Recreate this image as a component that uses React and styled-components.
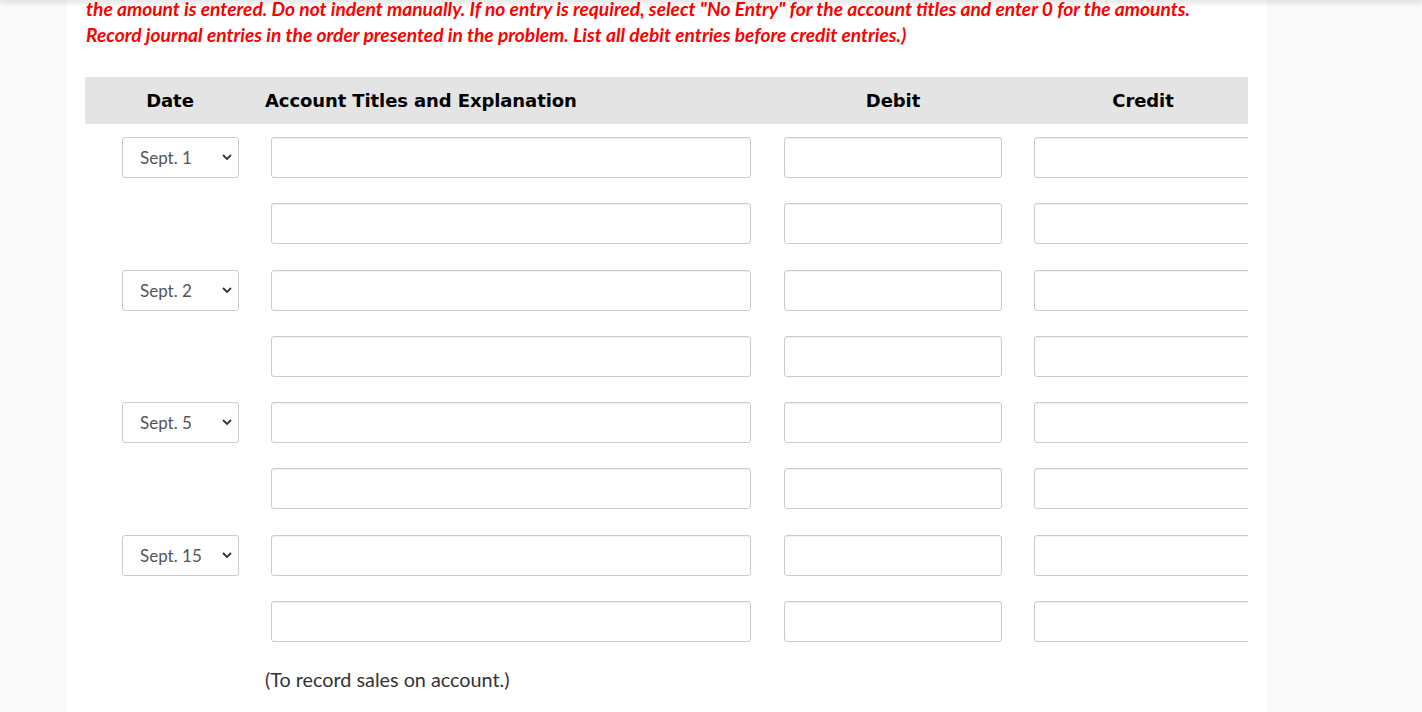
import React from "react";
import styled, { createGlobalStyle } from "styled-components";

const GlobalStyle = createGlobalStyle`
  html, body {
    margin: 0;
    padding: 0;
    background-color: #fafafa;
  }
  body {
    font-family: Lato, "Open Sans", sans-serif;
    overflow: hidden;
  }
`;

const TopShadow = styled.div`
  position: fixed;
  top: 0;
  left: 0;
  right: 0;
  height: 0;
  box-shadow: 0 0 6px 2px rgba(0, 0, 0, 0.18);
  z-index: 5;
`;

const Panel = styled.div`
  width: 1200px;
  min-height: 760px;
  margin-left: 67px;
  padding: 0 19px 0 18px;
  box-sizing: border-box;
  background-color: white;
`;

const Instructions = styled.p`
  margin: -4px 0 0 1px;
  color: #ff0000;
  font-family: Lato, sans-serif;
  font-style: italic;
  font-weight: 700;
  font-size: 19.2px;
  line-height: 26px;
  white-space: nowrap;
`;

const TableWrap = styled.div`
  margin-top: 29px;
  width: 1163px;
  overflow: hidden;
`;

const Grid = styled.div`
  display: grid;
  grid-template-columns: 186px 513px 250px 214px;
  align-items: ${(p) => p.$align || "center"};
`;

const HeaderRow = styled(Grid)`
  height: 47px;
  background-color: #e4e4e4;
`;

const HeaderCell = styled.div`
  font-family: "DejaVu Sans", Verdana, sans-serif;
  font-weight: 700;
  font-size: 18px;
  color: #000;
  letter-spacing: -0.1px;
  width: ${(p) => p.$width || "auto"};
  text-align: ${(p) => p.$align || "center"};
  padding-right: ${(p) => p.$pr || "0"};
  margin-left: ${(p) => p.$ml || "0"};
  white-space: nowrap;
`;

const BodyRow = styled(Grid)`
  height: 66.3px;
`;

const Body = styled.div`
  padding-top: 13px;
`;

const SelectWrap = styled.div`
  position: relative;
  margin-left: 37px;
  width: 117px;
  height: 41px;
`;

const Select = styled.select`
  appearance: none;
  width: 100%;
  height: 100%;
  border: 1px solid #cccccc;
  border-radius: 3px;
  background: white;
  padding: 0 0 0 17px;
  font-family: Lato, sans-serif;
  font-size: 17px;
  color: #555;
  box-sizing: border-box;
  outline: none;
`;

const Chevron = styled.svg`
  position: absolute;
  right: 6px;
  top: 15px;
  pointer-events: none;
`;

const Input = styled.input`
  width: ${(p) => p.$width};
  height: 41px;
  box-sizing: border-box;
  border: 1px solid #cccccc;
  border-radius: 3px;
  box-shadow: inset 0 1px 1px rgba(0, 0, 0, 0.06);
  background: white;
  font-family: Lato, sans-serif;
  font-size: 17px;
  padding: 0 10px;
  outline: none;
`;

const Note = styled.div`
  margin: -1px 0 0 180px;
  font-family: Lato, sans-serif;
  font-size: 19.8px;
  line-height: 26px;
  color: #333;
`;

const rows = [
  { date: "Sept. 1" },
  { date: null },
  { date: "Sept. 2" },
  { date: null },
  { date: "Sept. 5" },
  { date: null },
  { date: "Sept. 15" },
  { date: null },
];

const DateSelect = ({ value }) => (
  <SelectWrap>
    <Select defaultValue={value}>
      <option>{value}</option>
    </Select>
    <Chevron width="12" height="10" viewBox="0 0 12 10">
      <path d="M2 3 L6 7 L10 3" fill="none" stroke="#333" strokeWidth="1.8" />
    </Chevron>
  </SelectWrap>
);

const App = () => {
  return (
    <>
      <GlobalStyle />
      <TopShadow />
      <Panel>
        <Instructions>
          the amount is entered. Do not indent manually. If no entry is required, select "No Entry" for the account titles and enter 0 for the amounts.
          <br />
          Record journal entries in the order presented in the problem. List all debit entries before credit entries.)
        </Instructions>
        <TableWrap>
          <HeaderRow>
            <HeaderCell $pr="16px">Date</HeaderCell>
            <HeaderCell $align="left" $ml="-6px">
              Account Titles and Explanation
            </HeaderCell>
            <HeaderCell $width="218px">Debit</HeaderCell>
            <HeaderCell $width="218px">Credit</HeaderCell>
          </HeaderRow>
          <Body>
            {rows.map((r, i) => (
              <BodyRow key={i} $align="start">
                <div>{r.date && <DateSelect value={r.date} />}</div>
                <Input $width="480px" />
                <Input $width="218px" />
                <Input $width="218px" />
              </BodyRow>
            ))}
          </Body>
        </TableWrap>
        <Note>(To record sales on account.)</Note>
      </Panel>
    </>
  );
};

export default App;
